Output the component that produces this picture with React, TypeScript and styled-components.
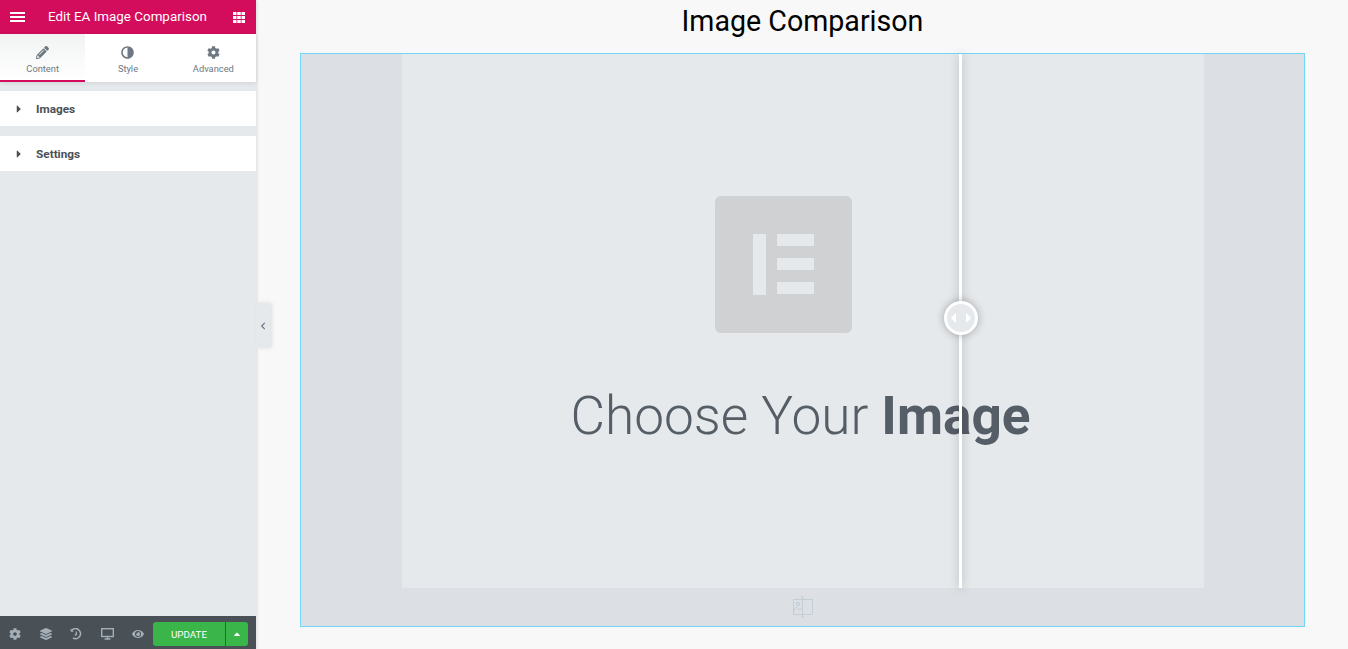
import styled, { createGlobalStyle } from 'styled-components';
import {
	FaAdjust,
	FaCaretRight,
	FaCaretUp,
	FaChevronLeft,
	FaCog,
	FaEye,
	FaLayerGroup,
	FaPencilAlt,
} from 'react-icons/fa';

const MirroredAdjust = styled(FaAdjust)`
	transform: scaleX(-1);
`;

function MenuIcon() {
	return (
		<svg width="15" height="10" viewBox="0 0 15 10" fill="#ffffff">
			<rect y="0" width="15" height="2" />
			<rect y="4" width="15" height="2" />
			<rect y="8" width="15" height="2" />
		</svg>
	);
}

function AppsIcon() {
	return (
		<svg width="12" height="11" viewBox="0 0 12 11" fill="#ffffff">
			{[0, 4.25, 8.5].map((x) =>
				[0, 4, 8].map((y) => <rect key={`${x}-${y}`} x={x} y={y} width="3.5" height="3" />),
			)}
		</svg>
	);
}

function HistoryIcon() {
	return (
		<svg width="12" height="12" viewBox="0 0 12 12" fill="none" stroke="currentColor" strokeWidth="1.6">
			<path d="M1.5 2.6A5 5 0 1 1 3 10" />
			<path d="M0.6 0.6v3.2h3.2z" fill="currentColor" stroke="none" />
			<path d="M6.4 3.4v3l-1.6 1" strokeWidth="1.3" />
		</svg>
	);
}

function MonitorIcon() {
	return (
		<svg width="13" height="12" viewBox="0 0 13 12" fill="none" stroke="currentColor" strokeWidth="1.4">
			<rect x="0.7" y="0.7" width="11.6" height="7.8" />
			<path d="M6.5 8.5v2M3.6 11h5.8" />
		</svg>
	);
}

function ComparisonIcon() {
	return (
		<svg width="22" height="22" viewBox="0 0 22 22" fill="none" stroke="#c5ced4" strokeWidth="1">
			<rect x="1.5" y="3.5" width="19" height="15" />
			<path d="M10.5 1v20M9 1h3M9 21h3" />
			<circle cx="6" cy="8" r="1.6" stroke="#b9cdd8" />
			<path d="M1.5 15l3-4 2.5 3 3.5-3" />
		</svg>
	);
}

const tabs = [
	{ label: 'Content', icon: <FaPencilAlt />, active: true },
	{ label: 'Style', icon: <MirroredAdjust />, active: false },
	{ label: 'Advanced', icon: <FaCog />, active: false },
];

const sections = ['Images', 'Settings'];

const footerIcons = [
	{ key: 'settings', icon: <FaCog /> },
	{ key: 'layers', icon: <FaLayerGroup /> },
	{ key: 'history', icon: <HistoryIcon /> },
	{ key: 'responsive', icon: <MonitorIcon /> },
	{ key: 'preview', icon: <FaEye /> },
];

const sliderPosition = `${(559.5 / 802) * 100}%`;

export default function App() {
	return (
		<>
			<GlobalStyle />
			<Page>
				<Sidebar>
					<PanelHeader>
						<MenuButton>
							<MenuIcon />
						</MenuButton>
						<PanelTitle>Edit EA Image Comparison</PanelTitle>
						<AppsButton>
							<AppsIcon />
						</AppsButton>
					</PanelHeader>
					<TabBar>
						{tabs.map((tab) => (
							<Tab key={tab.label} $active={tab.active}>
								<TabIcon>{tab.icon}</TabIcon>
								<TabLabel>{tab.label}</TabLabel>
							</Tab>
						))}
					</TabBar>
					<SectionList>
						{sections.map((section) => (
							<Section key={section}>
								<Caret>
									<FaCaretRight />
								</Caret>
								{section}
							</Section>
						))}
					</SectionList>
					<Footer>
						<FooterIcons>
							{footerIcons.map((item) => (
								<FooterIcon key={item.key}>{item.icon}</FooterIcon>
							))}
						</FooterIcons>
						<SaveGroup>
							<UpdateButton>UPDATE</UpdateButton>
							<SaveOptions>
								<FaCaretUp />
							</SaveOptions>
						</SaveGroup>
					</Footer>
					<CollapseHandle>
						<FaChevronLeft />
					</CollapseHandle>
				</Sidebar>
				<Preview>
					<Heading>Image Comparison</Heading>
					<Widget>
						<Placeholder>
							<LogoTile>
								<LogoBar />
								<LogoLines>
									<LogoLine />
									<LogoLine />
									<LogoLine />
								</LogoLines>
							</LogoTile>
							<ChooseText>
								Choose Your <strong>Image</strong>
							</ChooseText>
							<Divider style={{ left: sliderPosition }} />
							<Handle style={{ left: sliderPosition }}>
								<Arrow $side="left" />
								<Arrow $side="right" />
							</Handle>
						</Placeholder>
						<WidgetFooter>
							<ComparisonIcon />
						</WidgetFooter>
					</Widget>
				</Preview>
			</Page>
		</>
	);
}

const GlobalStyle = createGlobalStyle`
	html, body {
		margin: 0;
		padding: 0;
		height: 100%;
		overflow: hidden;
	}
	body {
		background: #f8f8f8;
		font-family: Roboto, "Liberation Sans", sans-serif;
	}
	* {
		box-sizing: border-box;
	}
`;

const Page = styled.div`
	display: flex;
	width: 1348px;
	height: 649px;
	background: #f8f8f8;
`;

const Sidebar = styled.aside`
	position: relative;
	display: flex;
	flex-direction: column;
	flex-shrink: 0;
	width: 256px;
	height: 100%;
	background: #e6e9ec;
	box-shadow: 1px 0 3px rgba(0, 0, 0, 0.12);
`;

const PanelHeader = styled.header`
	display: flex;
	align-items: center;
	height: 34px;
	flex-shrink: 0;
	background: #d30c5c;
	color: #ffffff;
`;

const MenuButton = styled.div`
	display: flex;
	justify-content: center;
	align-items: center;
	width: 35px;
`;

const PanelTitle = styled.div`
	flex: 1;
	padding: 0 0 2px 13px;
	font-size: 13.4px;
	font-weight: 400;
	white-space: nowrap;
`;

const AppsButton = styled.div`
	display: flex;
	justify-content: center;
	align-items: center;
	width: 35px;
`;

const TabBar = styled.nav`
	display: grid;
	grid-template-columns: repeat(3, 1fr);
	height: 48px;
	flex-shrink: 0;
	background: #ffffff;
	box-shadow: 0 1px 4px rgba(0, 0, 0, 0.1);
`;

const Tab = styled.div<{ $active: boolean }>`
	display: flex;
	flex-direction: column;
	align-items: center;
	padding-top: 12px;
	color: #6d7882;
	border-bottom: 2px solid ${(p) => (p.$active ? '#d30c5c' : 'transparent')};
	background: ${(p) => (p.$active ? 'linear-gradient(#f1f3f3, #ffffff)' : '#ffffff')};
`;

const TabIcon = styled.div`
	display: flex;
	height: 14px;
	font-size: 13px;
`;

const TabLabel = styled.div`
	margin-top: 3px;
	font-size: 9.3px;
	line-height: 12px;
`;

const SectionList = styled.div`
	display: flex;
	flex-direction: column;
	flex: 1;
	gap: 10px;
	padding-top: 9px;
`;

const Section = styled.div`
	display: flex;
	align-items: center;
	height: 35px;
	background: #ffffff;
	color: #495157;
	font-size: 11.8px;
	font-weight: 700;
`;

const Caret = styled.span`
	display: flex;
	justify-content: center;
	width: 36px;
	padding-left: 2px;
	font-size: 12px;
`;

const Footer = styled.footer`
	display: flex;
	align-items: center;
	justify-content: space-between;
	height: 33px;
	flex-shrink: 0;
	padding: 3px 8px 0 0;
	background: #495157;
`;

const FooterIcons = styled.div`
	display: flex;
`;

const FooterIcon = styled.div`
	display: flex;
	justify-content: center;
	align-items: center;
	width: 30.6px;
	font-size: 12px;
	color: #a4afb7;
`;

const SaveGroup = styled.div`
	display: flex;
	gap: 1px;
	height: 24px;
`;

const UpdateButton = styled.div`
	display: flex;
	justify-content: center;
	align-items: center;
	width: 72px;
	border-radius: 3px 0 0 3px;
	background: #39b54a;
	color: #ffffff;
	font-size: 9.8px;
	font-weight: 400;
`;

const SaveOptions = styled.div`
	display: flex;
	justify-content: center;
	align-items: center;
	width: 22px;
	border-radius: 0 3px 3px 0;
	background: #39b54a;
	color: #ffffff;
	font-size: 10px;
`;

const CollapseHandle = styled.div`
	position: absolute;
	top: 303px;
	left: 100%;
	display: flex;
	align-items: center;
	justify-content: center;
	width: 14px;
	height: 45px;
	background: #e6e9ec;
	box-shadow: 2px 0 4px rgba(0, 0, 0, 0.1);
	color: #6d7882;
	font-size: 8px;
`;

const Preview = styled.main`
	display: flex;
	flex-direction: column;
	flex: 1;
	padding: 0 43px 22px 44px;
`;

const Heading = styled.h1`
	height: 53px;
	margin: 0;
	padding-top: 4px;
	color: #000000;
	font-size: 28.6px;
	font-weight: 400;
	line-height: 34px;
	text-align: center;
`;

const Widget = styled.section`
	display: flex;
	flex-direction: column;
	align-items: center;
	flex: 1;
	border: 1px solid #71d7f7;
	background: #dcdfe3;
`;

const Placeholder = styled.div`
	position: relative;
	display: flex;
	flex-direction: column;
	align-items: center;
	width: 802px;
	height: 534px;
	padding-top: 142px;
	background: #e6e9ec;
`;

const LogoTile = styled.div`
	display: flex;
	justify-content: center;
	gap: 11px;
	width: 137px;
	height: 137px;
	margin-right: 39px;
	padding-top: 38px;
	border-radius: 6px;
	background: #d0d1d3;
`;

const LogoBar = styled.div`
	width: 13px;
	height: 61px;
	background: #e6e9ec;
`;

const LogoLines = styled.div`
	display: flex;
	flex-direction: column;
	gap: 12px;
`;

const LogoLine = styled.div`
	width: 37px;
	height: 12px;
	background: #e6e9ec;
`;

const ChooseText = styled.div`
	margin-top: 47px;
	margin-right: 4px;
	color: #555d66;
	font-size: 53.2px;
	font-weight: 300;
	line-height: 72px;
	white-space: nowrap;

	strong {
		font-weight: 700;
	}
`;

const Divider = styled.div`
	position: absolute;
	top: 0;
	bottom: 0;
	width: 3px;
	margin-left: -2px;
	background: #ffffff;
	box-shadow: 0 0 10px rgba(0, 0, 0, 0.3);
`;

const Handle = styled.div`
	position: absolute;
	top: 247px;
	display: flex;
	justify-content: center;
	align-items: center;
	gap: 10px;
	width: 34px;
	height: 34px;
	margin-left: -17px;
	border: 3px solid #ffffff;
	border-radius: 50%;
	background: #e6e9ec;
	box-shadow: 0 0 8px rgba(0, 0, 0, 0.3);
`;

const Arrow = styled.span<{ $side: 'left' | 'right' }>`
	width: 0;
	height: 0;
	border-top: 5px solid transparent;
	border-bottom: 5px solid transparent;
	border-${(p) => (p.$side === 'left' ? 'right' : 'left')}: 5px solid #ffffff;
`;

const WidgetFooter = styled.div`
	display: flex;
	justify-content: center;
	align-items: center;
	flex: 1;
	width: 100%;
`;
